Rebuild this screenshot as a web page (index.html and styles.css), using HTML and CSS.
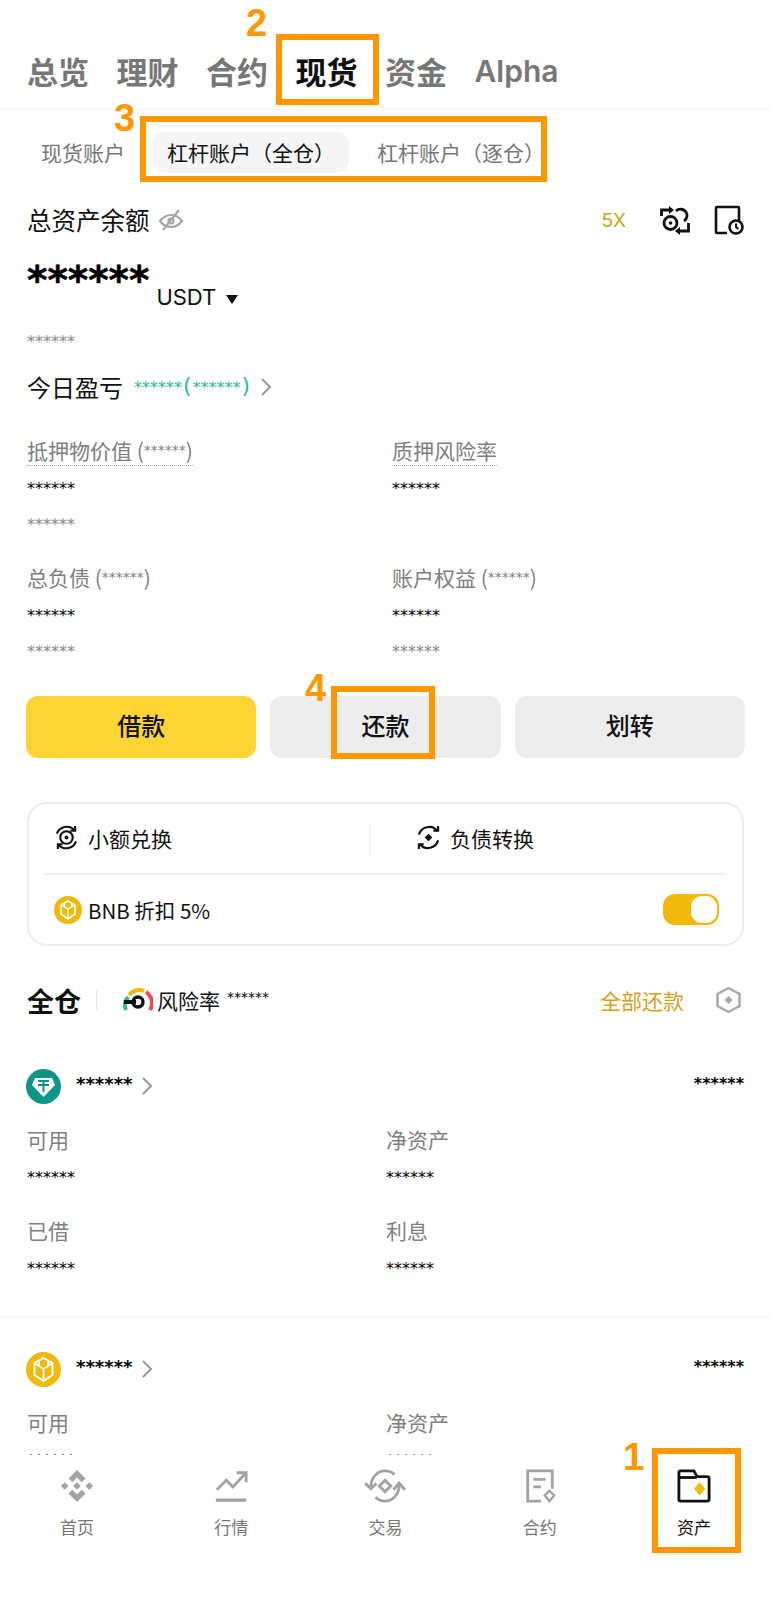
FILE: index.html
```html
<!DOCTYPE html>
<html lang="zh-CN">

<head>
    <meta charset="UTF-8">
    <meta name="viewport" content="width=device-width, initial-scale=1.0">
    <title>资产</title>
    <link rel="stylesheet" href="styles.css">
</head>

<body>

    <div class="content">
        <!-- Top tabs -->
        <div class="tabs">
            <span class="tab">总览</span>
            <span class="tab">理财</span>
            <span class="tab">合约</span>
            <span class="tab active">现货</span>
            <span class="tab">资金</span>
            <span class="tab">Alpha</span>
        </div>

        <!-- Account tabs -->
        <div class="sub-tabs">
            <span class="sub-tab">现货账户</span>
            <span class="sub-tab active">杠杆账户（全仓）</span>
            <span class="sub-tab">杠杆账户（逐仓）</span>
        </div>

        <!-- Balance -->
        <div class="balance-head">
            <span class="balance-title">总资产余额</span>
            <svg class="eye" viewBox="0 0 26 22" fill="none" stroke="#a8a8a8" stroke-width="2.200">
                <path d="M2 12c3-4 7-6 11-6s8 2 11 6c-3 4-7 6-11 6s-8-2-11-6z" />
                <circle cx="13" cy="12" r="2.500" />
                <path d="M5 21L21 1" />
            </svg>
            <span class="leverage">5X</span>
            <svg class="head-icon" viewBox="0 0 30 30" fill="none" stroke="#111" stroke-width="2.800">
                <path d="M1.500 11V5H9" />
                <path d="M9 1l5 4-5 4z" fill="#111" stroke="none" />
                <circle cx="10.500" cy="18" r="6.500" />
                <circle cx="10.500" cy="18" r="1.800" fill="#111" stroke="none" />
                <path d="M16 6c3-3 8-2 10 1s1 7-2 9" />
                <path d="M28.500 18v8H20" />
                <path d="M20 22l-5 4 5 4z" fill="#111" stroke="none" />
            </svg>
            <svg class="head-icon record" viewBox="0 0 30 30" fill="none" stroke="#111" stroke-width="2.600">
                <path d="M13 28H3a1 1 0 0 1-1-1V3a1 1 0 0 1 1-1h21a1 1 0 0 1 1 1v13" />
                <circle cx="22" cy="22" r="6.500" />
                <path d="M22 18.500V22l2.500 2" stroke-width="2" />
            </svg>
        </div>
        <div class="balance-row">
            <span class="stars-big">******</span>
            <span class="unit">USDT</span>
            <span class="caret"></span>
        </div>
        <div class="stars gray balance-sub">******</div>
        <div class="pnl">
            <span class="pnl-title">今日盈亏</span>
            <span class="stars green">******<span class="paren">(</span>******<span class="paren">)</span></span>
            <svg class="chevron" viewBox="0 0 12 22" fill="none" stroke="#999" stroke-width="2">
                <path d="M2 3l8 8-8 8" />
            </svg>
        </div>

        <!-- Margin figures -->
        <div class="figures">
            <div class="figure">
                <div><span class="figure-label dotted">抵押物价值 (<span class="label-stars">******</span>)</span></div>
                <div class="stars value">******</div>
                <div class="stars gray sub-value">******</div>
            </div>
            <div class="figure">
                <div><span class="figure-label dotted">质押风险率</span></div>
                <div class="stars value">******</div>
            </div>
            <div class="figure">
                <div><span class="figure-label">总负债 (<span class="label-stars">******</span>)</span></div>
                <div class="stars value">******</div>
                <div class="stars gray sub-value">******</div>
            </div>
            <div class="figure">
                <div><span class="figure-label">账户权益 (<span class="label-stars">******</span>)</span></div>
                <div class="stars value">******</div>
                <div class="stars gray sub-value">******</div>
            </div>
        </div>

        <!-- Actions -->
        <div class="actions">
            <button class="action primary">借款</button>
            <button class="action">还款</button>
            <button class="action">划转</button>
        </div>

        <!-- Convert card -->
        <div class="card">
            <div class="card-top">
                <div class="card-cell">
                    <svg class="card-icon" viewBox="0 0 26 26" fill="none" stroke="#111" stroke-width="2.200">
                        <path d="M3 9a11 11 0 0 1 18-4M23 17a11 11 0 0 1-18 4" />
                        <path d="M22 1v5h-5M4 25v-5h5" />
                        <circle cx="13" cy="13" r="6.500" />
                        <circle cx="13" cy="13" r="2" fill="#111" stroke="none" />
                    </svg>
                    <span>小额兑换</span>
                </div>
                <div class="card-cell second">
                    <svg class="card-icon" viewBox="0 0 26 26" fill="none" stroke="#111" stroke-width="2.200">
                        <path d="M3 10a11 11 0 0 1 19-4M23 16a11 11 0 0 1-19 4" />
                        <path d="M23 1v5h-5M3 25v-5h5" />
                        <path d="M13 9l4 4-4 4-4-4z" fill="#111" stroke="none" />
                    </svg>
                    <span>负债转换</span>
                </div>
            </div>
            <div class="card-bottom">
                <svg class="bnb-icon" viewBox="0 0 28 28">
                    <circle cx="14" cy="14" r="14" fill="#f0b90b" />
                    <path d="M14 5l7 4v9l-7 5-7-5V9z" fill="none" stroke="#fff" stroke-width="1.600" />
                    <path d="M7 9l7 4 7-4M14 13v10M10.500 7v4M17.500 7v4" fill="none" stroke="#fff" stroke-width="1.400" />
                </svg>
                <span>BNB 折扣 5%</span>
                <span class="toggle"><span class="knob"></span></span>
            </div>
        </div>

        <!-- Cross margin -->
        <div class="section-head">
            <span class="section-title">全仓</span>
            <span class="section-rule"></span>
            <svg class="gauge" viewBox="0 0 30 28" fill="none" stroke-width="4">
                <path d="M3 24a13 13 0 0 1 2-13" stroke="#2ebd85" />
                <path d="M6 9a13 13 0 0 1 15-4" stroke="#f0b90b" />
                <path d="M23 6a13 13 0 0 1 4 18" stroke="#f6465d" />
                <circle cx="15" cy="16" r="5" stroke="#111" stroke-width="3.400" />
                <path d="M1 16h12" stroke="#111" stroke-width="4" />
            </svg>
            <span class="risk-label">风险率</span>
            <span class="stars risk-value">******</span>
            <span class="repay-all">全部还款</span>
            <svg class="hex" viewBox="0 0 27 28" fill="none" stroke="#a8a8a8" stroke-width="2.400">
                <path d="M13.500 2l11 6v12l-11 6-11-6V8z" />
                <path d="M13.500 10l4 4-4 4-4-4z" fill="#a8a8a8" stroke="none" />
            </svg>
        </div>

        <div class="asset first">
            <div class="asset-head">
                <svg class="coin" viewBox="0 0 35 35">
                    <circle cx="17.500" cy="17.500" r="17.500" fill="#0f9488" />
                    <path d="M9 9h17l3 7-11.500 12L6 16z" fill="#fff" />
                    <path d="M12 12h11M17.500 12v11M12 16h11" stroke="#0f9488" stroke-width="2" fill="none" />
                </svg>
                <span class="stars asset-name">******</span>
                <svg class="chevron" viewBox="0 0 12 22" fill="none" stroke="#999" stroke-width="2">
                    <path d="M2 3l8 8-8 8" />
                </svg>
                <span class="stars asset-total">******</span>
            </div>
            <div class="asset-grid">
                <div>
                    <div class="asset-label">可用</div>
                    <div class="stars asset-value">******</div>
                </div>
                <div>
                    <div class="asset-label">净资产</div>
                    <div class="stars asset-value">******</div>
                </div>
                <div>
                    <div class="asset-label">已借</div>
                    <div class="stars asset-value">******</div>
                </div>
                <div>
                    <div class="asset-label">利息</div>
                    <div class="stars asset-value">******</div>
                </div>
            </div>
        </div>

        <div class="asset">
            <div class="asset-head">
                <svg class="coin" viewBox="0 0 35 35">
                    <circle cx="17.500" cy="17.500" r="17.500" fill="#f0b90b" />
                    <path d="M17.500 6l9 5v12l-9 6-9-6V11z" fill="none" stroke="#fff" stroke-width="2" />
                    <path d="M8.500 11l9 6 9-6M17.500 17v12M13 8.500v5M22 8.500v5" fill="none" stroke="#fff" stroke-width="1.800" />
                </svg>
                <span class="stars asset-name">******</span>
                <svg class="chevron" viewBox="0 0 12 22" fill="none" stroke="#999" stroke-width="2">
                    <path d="M2 3l8 8-8 8" />
                </svg>
                <span class="stars asset-total">******</span>
            </div>
            <div class="asset-grid">
                <div>
                    <div class="asset-label">可用</div>
                    <div class="stars asset-value">******</div>
                </div>
                <div>
                    <div class="asset-label">净资产</div>
                    <div class="stars asset-value">******</div>
                </div>
            </div>
        </div>
    </div>

    <!-- Bottom nav -->
    <div class="nav">
        <div class="nav-item">
            <svg class="nav-icon" viewBox="0 0 36 36" fill="#a3a3a3">
                <path d="M18 1l9 9-4 4-5-5-5 5-4-4zM18 35l-9-9 4-4 5 5 5-5 4 4zM5 14l4 4-4 4-4-4zM31 14l4 4-4 4-4-4zM18 14l4 4-4 4-4-4z" />
            </svg>
            <span>首页</span>
        </div>
        <div class="nav-item">
            <svg class="nav-icon" viewBox="0 0 36 36" fill="none" stroke="#a3a3a3" stroke-width="3">
                <path d="M2 33h32" stroke-width="3.500" />
                <path d="M3 22l10-10 7 7 13-14" />
                <path d="M24 4h10v10" />
            </svg>
            <span>行情</span>
        </div>
        <div class="nav-item">
            <svg class="nav-icon wide" viewBox="0 0 44 36" fill="none" stroke="#a3a3a3" stroke-width="3">
                <path d="M7 19C7 9 14 2 22 2c4 0 7 1 10 4" />
                <path d="M37 17c0 10-7 17-15 17-4 0-7-1-10-4" />
                <path d="M1 15l6 6 6-6M31 22l6-7 6 7" />
                <path d="M22 12l6 6-6 6-6-6z" />
            </svg>
            <span>交易</span>
        </div>
        <div class="nav-item">
            <svg class="nav-icon" viewBox="0 0 36 36" fill="none" stroke="#a3a3a3" stroke-width="3">
                <path d="M19 34H5V2h26v19" />
                <path d="M11 11h13M11 19h8" />
                <path d="M28 23l5 5-5 6-5-6z" stroke-width="2.500" />
            </svg>
            <span>合约</span>
        </div>
        <div class="nav-item current">
            <svg class="nav-icon" viewBox="0 0 36 36" fill="none" stroke="#111" stroke-width="3">
                <path d="M4 34a2 2 0 0 1-2-2V4a2 2 0 0 1 2-2h14l3 6h11a2 2 0 0 1 2 2v22a2 2 0 0 1-2 2z" />
                <path d="M2 9h19" />
                <path d="M24 14l6 7-6 7-6-7z" fill="#f0b90b" stroke="none" />
            </svg>
            <span>资产</span>
        </div>
    </div>

    <!-- Tutorial annotations -->
    <span class="mark mark-tabs"></span>
    <span class="mark mark-sub"></span>
    <span class="mark mark-repay"></span>
    <span class="mark mark-nav"></span>
    <span class="step step-1">1</span>
    <span class="step step-2">2</span>
    <span class="step step-3">3</span>
    <span class="step step-4">4</span>

</body>

</html>
```

FILE: styles.css
```css
/* Basic reset */
* {
    margin: 0;
    padding: 0;
    box-sizing: border-box;
}

body {
    position: relative;
    display: flex;
    flex-direction: column;
    width: 771px;
    height: 1600px;
    overflow: hidden;
    background-color: #fff;
    color: #111;
    font-family: "Noto Sans CJK SC", "Liberation Sans", sans-serif;
}

svg {
    display: block;
    flex-shrink: 0;
}

.content {
    flex: 1;
    min-height: 0;
    overflow: hidden;
}

/* Masked numbers */
.stars {
    font-family: "DejaVu Sans", sans-serif;
    font-size: 16px;
    line-height: 20px;
    color: #000;
}

.gray {
    color: #8a8a8a;
}

.green {
    color: #2ebd85;
}

/* Top tabs */
.tabs {
    display: flex;
    gap: 27.500px;
    height: 110px;
    padding: 50px 27px 0;
    border-bottom: 1px solid #f3f3f3;
}

.tab {
    font-size: 31px;
    line-height: 42px;
    font-weight: 700;
    color: #777;
}

.tab:last-child {
    font-family: Inter, sans-serif;
    font-size: 30px;
    font-weight: 600;
}

.tab.active {
    color: #111;
}

/* Account tabs */
.sub-tabs {
    display: flex;
    gap: 14px;
    margin-top: 22px;
    padding-left: 27px;
}

.sub-tab {
    height: 41px;
    padding: 0 14px;
    font-size: 21px;
    line-height: 41px;
    color: #777;
}

.sub-tab.active {
    border-radius: 12px;
    background-color: #f5f5f5;
    color: #111;
}

/* Balance */
.balance-head {
    display: flex;
    align-items: center;
    height: 32px;
    margin-top: 31px;
    padding: 0 27px;
}

.balance-title {
    font-size: 24.500px;
    line-height: 32px;
}

.eye {
    width: 26px;
    height: 22px;
    margin-left: 8px;
}

.leverage {
    margin-left: auto;
    margin-right: 34px;
    font-family: Inter, sans-serif;
    font-size: 19px;
    color: #d0a020;
}

.head-icon {
    width: 30px;
    height: 30px;
}

.head-icon.record {
    margin-left: 24px;
}

.balance-row {
    display: flex;
    align-items: flex-end;
    margin-top: 21px;
    padding: 0 27px;
}

.stars-big {
    font-family: "DejaVu Sans", sans-serif;
    font-size: 39px;
    font-weight: 700;
    line-height: 48px;
    color: #000;
    -webkit-text-stroke: 0.5px #000;
}

.unit {
    margin: 0 0 -7px 7px;
    font-family: Inter, sans-serif;
    font-size: 22px;
    line-height: 30px;
}

.caret {
    width: 0;
    height: 0;
    margin: 0 0 1px 10px;
    border-top: 9px solid #111;
    border-left: 6px solid transparent;
    border-right: 6px solid transparent;
}

.balance-sub {
    margin-top: 27px;
    padding-left: 27px;
}

.pnl {
    display: flex;
    align-items: center;
    height: 32px;
    margin-top: 19px;
    padding-left: 27px;
}

.pnl-title {
    margin-right: 11px;
    font-size: 24px;
    line-height: 32px;
}

.paren {
    margin: 0 1px;
    font-size: 22px;
}

.chevron {
    width: 12px;
    height: 22px;
    margin-left: 9px;
}

/* Margin figures */
.figures {
    display: grid;
    grid-template-columns: 365px 1fr;
    row-gap: 28px;
    margin-top: 33px;
    padding: 0 27px;
}

.figure {
    min-height: 96px;
}

.figure-label {
    display: inline-block;
    height: 30px;
    font-size: 21px;
    line-height: 28px;
    color: #808080;
}

.figure-label.dotted {
    border-bottom: 1px dotted #aaa;
}

.label-stars {
    font-family: "DejaVu Sans", sans-serif;
    font-size: 14px;
    vertical-align: 4px;
}

.value {
    margin-top: 13px;
}

.sub-value {
    margin-top: 16px;
}

/* Actions */
.actions {
    display: grid;
    grid-template-columns: repeat(3, 1fr);
    gap: 14px;
    margin-top: 34px;
    padding: 0 26px;
}

.action {
    height: 62px;
    padding-bottom: 5px;
    border: none;
    border-radius: 12px;
    background-color: #ededed;
    color: #111;
    font-family: inherit;
    font-size: 24px;
    font-weight: 500;
}

.action.primary {
    background-color: #fcd535;
}

/* Convert card */
.card {
    margin: 44px 27px 0;
    height: 144px;
    padding: 0 16px;
    border: 2px solid #eeeeee;
    border-radius: 20px;
}

.card-top {
    display: flex;
    align-items: center;
    height: 71px;
    border-bottom: 2px solid #f2f2f2;
}

.card-cell {
    display: flex;
    align-items: center;
    gap: 9px;
    width: 325px;
    height: 34px;
    padding-left: 9px;
    padding-bottom: 2px;
    font-size: 21px;
    border-right: 1px solid #f0f0f0;
}

.card-cell.second {
    padding-left: 46px;
    border-right: none;
}

.card-icon {
    width: 25px;
    height: 25px;
}

.card-bottom {
    display: flex;
    align-items: center;
    gap: 6px;
    height: 69px;
    padding: 0 7px 0 9px;
    font-size: 20.500px;
}

.bnb-icon {
    width: 28px;
    height: 28px;
}

.toggle {
    display: flex;
    justify-content: flex-end;
    align-items: center;
    width: 56px;
    height: 31px;
    margin-left: auto;
    padding-right: 2px;
    border-radius: 12px;
    background-color: #f0b90b;
}

.knob {
    width: 26px;
    height: 27px;
    border-radius: 11px;
    background-color: #fff;
}

/* Cross margin */
.section-head {
    display: flex;
    align-items: center;
    height: 38px;
    margin-top: 35px;
    padding: 0 29px 0 27px;
}

.section-title {
    font-size: 27px;
    font-weight: 700;
}

.section-rule {
    width: 1px;
    height: 20px;
    margin: 0 26px 0 15px;
    background-color: #eaeaea;
}

.gauge {
    width: 30px;
    height: 28px;
}

.risk-label {
    margin-left: 4px;
    font-size: 21px;
}

.risk-value {
    margin-left: 7px;
    margin-bottom: 6px;
    font-size: 14px;
}

.repay-all {
    margin-left: auto;
    font-size: 21px;
    color: #d89f1f;
}

.hex {
    width: 27px;
    height: 28px;
    margin-left: 31px;
}

.asset {
    height: 249px;
    padding: 33px 27px 0;
    border-top: 1px solid #f3f3f3;
}

.asset.first {
    margin-top: 49px;
    padding-top: 0;
    border-top: none;
}

.asset-head {
    display: flex;
    align-items: center;
    height: 36px;
}

.coin {
    width: 35px;
    height: 35px;
    margin-left: -1px;
}

.asset-name {
    margin-left: 15px;
    margin-bottom: 4px;
    font-size: 18px;
    font-weight: 700;
}

.asset-total {
    margin-left: auto;
    margin-bottom: 4px;
    font-weight: 700;
}

.asset-grid {
    display: grid;
    grid-template-columns: 359px 1fr;
    row-gap: 27px;
    margin-top: 20px;
}

.asset-label {
    font-size: 21px;
    line-height: 30px;
    color: #808080;
}

.asset-value {
    margin-top: 14px;
}

/* Bottom nav */
.nav {
    display: grid;
    grid-template-columns: repeat(5, 1fr);
    height: 145px;
    background-color: #fff;
}

.nav-item {
    display: flex;
    flex-direction: column;
    align-items: center;
    gap: 12px;
    padding-top: 14px;
    font-size: 17px;
    line-height: 24px;
    color: #777;
}

.nav-item.current {
    color: #111;
}

.nav-icon {
    width: 34px;
    height: 34px;
}

.nav-icon.wide {
    width: 42px;
}

/* Tutorial annotations */
.mark {
    position: absolute;
    border: 6px solid #ff9800;
}

.mark-tabs {
    left: 276px;
    top: 34px;
    width: 103px;
    height: 71px;
}

.mark-sub {
    left: 140px;
    top: 116px;
    width: 407px;
    height: 66px;
}

.mark-repay {
    left: 331px;
    top: 686px;
    width: 104px;
    height: 73px;
}

.mark-nav {
    left: 652px;
    top: 1448px;
    width: 89px;
    height: 105px;
}

.step {
    position: absolute;
    font-family: "Liberation Sans", sans-serif;
    font-size: 38px;
    line-height: 38px;
    font-weight: 700;
    color: #ff9800;
}

.step-1 {
    left: 623px;
    top: 1438px;
}

.step-2 {
    left: 246px;
    top: 4px;
}

.step-3 {
    left: 114px;
    top: 99px;
}

.step-4 {
    left: 305px;
    top: 669px;
}
```
